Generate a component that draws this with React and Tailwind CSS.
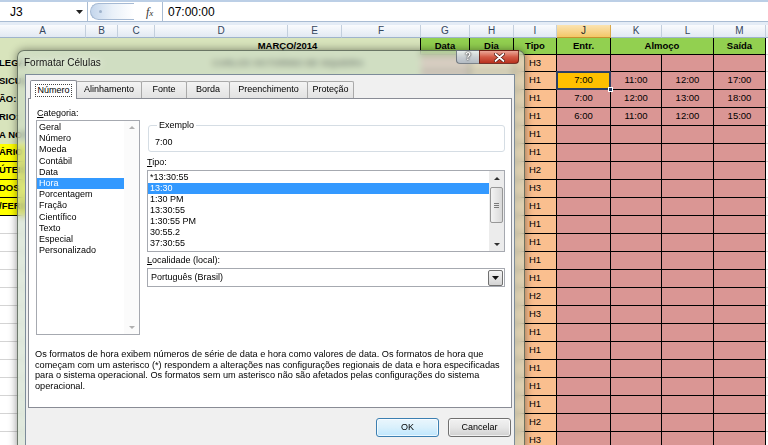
import React from 'react';

const tipos = ['H3','H1','H1','H1','H1','H1','H2','H3','H1','H1','H1','H1','H1','H2','H3','H1','H1','H1','H1','H1','H2','H3'];
const times = {
  3: ['7:00', '11:00', '12:00', '17:00'],
  4: ['7:00', '12:00', '13:00', '18:00'],
  5: ['6:00', '11:00', '12:00', '15:00'],
};
const leftText = { 2: 'LEGA:', 3: 'SICULO', 4: 'ÃO:', 5: 'RIO:', 6: 'A NOITE', 7: 'ÁRIO', 8: 'ÚTEIS', 9: 'DOS', 10: '/FERIADOS' };

const headers = [
  ['A', 'w-[86px]'], ['B', 'w-[32px]'], ['C', 'w-[37px]'], ['D', 'w-[133px]'], ['E', 'w-[54px]'],
  ['F', 'w-[79px]'], ['G', 'w-[49px]'], ['H', 'w-[44px]'], ['I', 'w-[43px]'], ['J', 'w-[54px]'],
  ['K', 'w-[51px]'], ['L', 'w-[52px]'], ['M', 'w-[52px]'], ['N', 'w-[30px]'],
];

function FormulaBar() {
  return (
    <div className="h-[22px] flex bg-white border-t-2 border-t-[#bccfe6] border-b border-b-[#a9bcd3]">
      <div className="w-[88px] flex items-center justify-between pl-[10px] pr-[4px] border-r border-[#a9bcd3]">
        <span className="text-[12px] text-black">J3</span>
        <svg width="7" height="4" viewBox="0 0 7 4"><path d="M0 0h7L3.5 4z" fill="#222" /></svg>
      </div>
      <div className="w-[74px] flex items-center pl-[2px]">
        <div className="w-[44px] h-[17px] rounded-l-full border border-r-0 border-[#a6bad4] bg-linear-to-r from-[#c4d6ec] via-[#eaf1f9] to-white flex items-center pl-[8px]">
          <div className="w-[3px] h-[3px] rounded-full bg-[#9fb3cc]"></div>
        </div>
        <span className="ml-[12px] font-['Liberation_Serif',serif] italic text-[12px] text-[#333] leading-none">f<span className="text-[9px]">x</span></span>
      </div>
      <div className="flex-1 flex items-center pl-[5px] border-l border-[#a9bcd3]">
        <span className="text-[12px] text-black">07:00:00</span>
      </div>
    </div>
  );
}

function HeaderRow() {
  return (
    <div className="flex h-[13px]">
      {headers.map(([l, w]) => (
        <div
          key={l}
          className={
            w + ' shrink-0 flex items-center justify-center text-[10px] leading-none border-r border-b ' +
            (l === 'J'
              ? 'bg-linear-to-b from-[#fbe3b0] to-[#f3c766] border-r-[#d9a84a] border-b-[#c8912f] text-[#2a2a2a]'
              : 'bg-linear-to-b from-[#f9fbfd] to-[#e2e9f3] border-r-[#c3cfdd] border-b-[#9fb4cc] text-[#34465e]')
          }
        >
          {l}
        </div>
      ))}
    </div>
  );
}

function Row1() {
  const g = 'shrink-0 bg-[#92d050] border-r border-b border-black flex items-center justify-center font-bold text-[9.5px] text-black';
  return (
    <div className="flex h-[17px]">
      <div className="w-[155px] shrink-0 bg-[#d8e4bc]"></div>
      <div className="w-[266px] shrink-0 bg-[#d8e4bc] border-r border-black flex items-center justify-center font-bold text-[9.5px] text-black">MARÇO/2014</div>
      <div className={'w-[49px] ' + g}>Data</div>
      <div className={'w-[44px] ' + g}>Dia</div>
      <div className={'w-[43px] ' + g}>Tipo</div>
      <div className={'w-[54px] ' + g}>Entr.</div>
      <div className={'w-[103px] ' + g}>Almoço</div>
      <div className={'w-[52px] ' + g}>Saída</div>
      <div className="w-[30px] shrink-0 bg-white border-b border-[#d4d4d4]"></div>
    </div>
  );
}

function BodyRow({ r }) {
  const h = r === 2 ? 'h-[17px]' : 'h-[18px]';
  const t = times[r] || ['', '', '', ''];
  const green = r <= 6;
  const yellow = r >= 7 && r <= 10;
  const aCls = green
    ? 'bg-[#d8e4bc]'
    : yellow
    ? 'bg-[#ffff00] border-b border-black'
    : 'bg-white border-b border-r border-[#d4d4d4]';
  const restCls = green ? 'bg-[#d8e4bc]' : 'bg-white border-b border-r border-[#d4d4d4]';
  const pink = 'shrink-0 bg-[#da9694] border-r border-b border-black flex items-center justify-center text-[9.5px] text-black';
  return (
    <div className={'flex ' + h}>
      <div className={'w-[86px] shrink-0 overflow-hidden whitespace-nowrap flex items-center font-bold text-[9.5px] text-black ' + aCls}>
        <span className="-ml-[1px]">{leftText[r] || ''}</span>
      </div>
      <div className={'w-[69px] shrink-0 ' + restCls}></div>
      <div className={'w-[266px] shrink-0 flex items-center justify-center font-bold text-[9px] text-black ' + restCls}>
        {r === 2 ? 'CARLOS VICTORINO DE SIQUEIRA' : ''}
      </div>
      <div className="w-[49px] shrink-0 bg-[#e6b8b7] border-r border-b border-black"></div>
      <div className="w-[44px] shrink-0 bg-[#fcd5b4] border-r border-b border-black"></div>
      <div className="w-[43px] shrink-0 bg-[#fabf8f] border-r border-b border-black flex items-center justify-center text-[9.5px] text-black">
        {tipos[r - 2]}
      </div>
      {r === 3 ? (
        <div className="w-[54px] shrink-0 relative bg-[#ffc000] border-r border-b border-black flex items-center justify-center text-[9.5px] text-black">
          7:00
          <div className="absolute -left-[1px] -top-[1px] -right-[1px] -bottom-[1px] border-2 border-[#2c3e63]"></div>
          <div className="absolute -right-[3px] -bottom-[3px] w-[5px] h-[5px] bg-[#2c3e63] border border-white"></div>
        </div>
      ) : (
        <div className={'w-[54px] ' + pink}>{t[0]}</div>
      )}
      <div className={'w-[51px] ' + pink}>{t[1]}</div>
      <div className={'w-[52px] ' + pink}>{t[2]}</div>
      <div className={'w-[52px] ' + pink}>{t[3]}</div>
      <div className="w-[30px] shrink-0 bg-white border-b border-[#d4d4d4]"></div>
    </div>
  );
}

function Tab({ w, label, active }) {
  if (active) {
    return (
      <div className={w + ' relative z-10 h-[19px] -mb-px bg-white border border-b-0 border-[#898c95] rounded-t-[2px] flex items-center justify-center'}>
        <span className="border border-dotted border-[#444] px-[1px] leading-[11px]">{label}</span>
      </div>
    );
  }
  return (
    <div className={w + ' -ml-px h-[17px] bg-linear-to-b from-[#f3f3f3] to-[#e2e2e2] border border-b-0 border-[#a9a9a9] rounded-t-[2px] flex items-center justify-center'}>
      {label}
    </div>
  );
}

const cats = ['Geral','Número','Moeda','Contábil','Data','Hora','Porcentagem','Fração','Científico','Texto','Especial','Personalizado'];
const tiposFmt = ['*13:30:55','13:30','1:30 PM','13:30:55','1:30:55 PM','30:55.2','37:30:55'];

function Dialog() {
  return (
    <div className="absolute left-[17px] top-[50px] w-[508px] h-[400px] rounded-t-[7px] border border-[#3f4a3f]/70 bg-[#cbdac6]/60 backdrop-blur-[3px] shadow-[0_0_8px_rgba(0,0,0,0.45)]">
      <div className="h-[23px] flex items-center pl-[6px] text-[10px] text-[#151515] [text-shadow:0_0_6px_rgba(255,255,255,0.9)]">
        Formatar Células
      </div>
      <div className="absolute right-[5px] -top-px flex">
        <div className="w-[24px] h-[14px] rounded-bl-[4px] border border-[#4b5560]/70 bg-linear-to-b from-[#eef1f4]/90 via-[#c9d1d9]/85 to-[#aeb9c4]/85 flex items-center justify-center text-white font-bold text-[10px] leading-none [text-shadow:0_0_2px_#333,0_0_1px_#222]">
          ?
        </div>
        <div className="w-[40px] h-[14px] -ml-px rounded-br-[4px] border border-[#5a1a12]/80 bg-linear-to-b from-[#eaa798] via-[#d35a45] to-[#b9311d] flex items-center justify-center">
          <svg width="11" height="9" viewBox="0 0 11 9">
            <path d="M1.5 1l8 7M9.5 1l-8 7" stroke="#4a1208" strokeWidth="3.2" strokeLinecap="round" />
            <path d="M1.5 1l8 7M9.5 1l-8 7" stroke="#ffffff" strokeWidth="1.8" strokeLinecap="round" />
          </svg>
        </div>
      </div>

      <div className="ml-[7px] w-[490px] h-[380px] border border-[#7c8b99] bg-[#f0f0f0] px-[2px] pt-[4px] text-[9px] text-black">
        <div className="flex items-end h-[19px] pl-[2px]">
          <Tab w="w-[47px]" label="Número" active />
          <Tab w="w-[66px]" label="Alinhamento" />
          <Tab w="w-[46px]" label="Fonte" />
          <Tab w="w-[44px]" label="Borda" />
          <Tab w="w-[79px]" label="Preenchimento" />
          <Tab w="w-[47px]" label="Proteção" />
        </div>

        <div className="h-[310px] w-[484px] bg-white border border-[#898c95] pl-[7px] pt-[9px]">
          <div className="flex gap-[7px] items-start">
            <div className="w-[104px] shrink-0">
              <div className="h-[12px] leading-[11px] pl-[1px]"><u className="underline-offset-1">C</u>ategoria:</div>
              <div className="h-[215px] border border-[#a6a9b0] bg-white flex">
                <div className="flex-1 pt-[1px]">
                  {cats.map((c) => (
                    <div key={c} className={'h-[11.2px] leading-[11.2px] pl-[2px] ' + (c === 'Hora' ? 'bg-[#3399ff] text-white' : '')}>
                      {c}
                    </div>
                  ))}
                </div>
                <div className="w-[15px] bg-[#fbfbfb] flex flex-col items-center justify-between py-[5px]">
                  <svg width="6" height="3" viewBox="0 0 6 3"><path d="M0 3h6L3 0z" fill="#b0b0b0" /></svg>
                  <svg width="6" height="3" viewBox="0 0 6 3"><path d="M0 0h6L3 3z" fill="#b0b0b0" /></svg>
                </div>
              </div>
            </div>

            <div className="w-[358px] shrink-0 mt-[12px]">
              <fieldset className="h-[32px] border border-[#d5dde4] rounded-[3px] ml-px pl-[6px]">
                <legend className="ml-[2px] px-[2px] leading-[11px]">Exemplo</legend>
                <div className="pt-[6px] leading-[11px]">7:00</div>
              </fieldset>
              <div className="mt-[5px] leading-[11px]"><u className="underline-offset-1">T</u>ipo:</div>
              <div className="mt-[2px] h-[82px] border border-[#a6a9b0] bg-white flex">
                <div className="flex-1 pt-[1px]">
                  {tiposFmt.map((c, i) => (
                    <div key={i} className={'h-[11px] leading-[11px] pl-[2px] ' + (i === 1 ? 'bg-[#3399ff] text-white' : '')}>
                      {c}
                    </div>
                  ))}
                </div>
                <div className="w-[15px] bg-[#ececec] flex flex-col items-center pt-[1px]">
                  <div className="h-[13px] w-full flex items-center justify-center">
                    <svg width="6" height="3" viewBox="0 0 6 3"><path d="M0 3h6L3 0z" fill="#303030" /></svg>
                  </div>
                  <div className="mt-[2px] w-[13px] h-[36px] rounded-[2px] border border-[#979797] bg-linear-to-r from-[#f3f3f3] to-[#d9d9d9] flex flex-col items-center justify-center gap-[1px]">
                    <div className="w-[5px] h-px bg-[#7a7a7a]"></div>
                    <div className="w-[5px] h-px bg-[#7a7a7a]"></div>
                    <div className="w-[5px] h-px bg-[#7a7a7a]"></div>
                  </div>
                  <div className="flex-1"></div>
                  <div className="h-[13px] w-full flex items-center justify-center">
                    <svg width="6" height="3" viewBox="0 0 6 3"><path d="M0 0h6L3 3z" fill="#303030" /></svg>
                  </div>
                </div>
              </div>
              <div className="mt-[3px] leading-[11px]"><u className="underline-offset-1">L</u>ocalidade (local):</div>
              <div className="mt-[2px] h-[19px] border border-[#a6a9b0] bg-white flex items-center justify-between pl-[3px] pr-px">
                <span>Português (Brasil)</span>
                <div className="w-[15px] h-[16px] border border-[#707070] rounded-[2px] bg-linear-to-b from-[#f4f4f4] to-[#d4d4d4] flex items-center justify-center">
                  <svg width="7" height="4" viewBox="0 0 7 4"><path d="M0 0h7L3.5 4z" fill="#111" /></svg>
                </div>
              </div>
            </div>
          </div>

          <div className="mt-[14px] -ml-px text-[9.2px] leading-[10.7px] whitespace-nowrap">
            Os formatos de hora exibem números de série de data e hora como valores de data. Os formatos de hora que<br />
            começam com um asterisco (*) respondem a alterações nas configurações regionais de data e hora especificadas<br />
            para o sistema operacional. Os formatos sem um asterisco não são afetados pelas configurações do sistema<br />
            operacional.
          </div>
        </div>

        <div className="flex justify-end gap-[9px] mt-[10px] pr-px">
          <div className="w-[63px] h-[19px] rounded-[3px] border border-[#3c7fb1] bg-linear-to-b from-[#eaf6fd] via-[#d9f0fc] to-[#bee6fd] flex items-center justify-center shadow-[inset_0_0_0_1px_rgba(255,255,255,0.7)]">
            OK
          </div>
          <div className="w-[63px] h-[19px] rounded-[3px] border border-[#707070] bg-linear-to-b from-[#f2f2f2] via-[#e6e6e6] to-[#d0d0d0] flex items-center justify-center shadow-[inset_0_0_0_1px_rgba(255,255,255,0.7)]">
            Cancelar
          </div>
        </div>
      </div>
    </div>
  );
}

export default function App() {
  const rows = [];
  for (let r = 2; r <= 23; r++) rows.push(r);
  return (
    <div className="relative w-[768px] h-[445px] overflow-hidden bg-white font-['Liberation_Sans',Arial,sans-serif]">
      <FormulaBar />
      <div className="h-[3px] bg-[#e4ecf6]"></div>
      <HeaderRow />
      <Row1 />
      {rows.map((r) => (
        <BodyRow key={r} r={r} />
      ))}
      <Dialog />
    </div>
  );
}
